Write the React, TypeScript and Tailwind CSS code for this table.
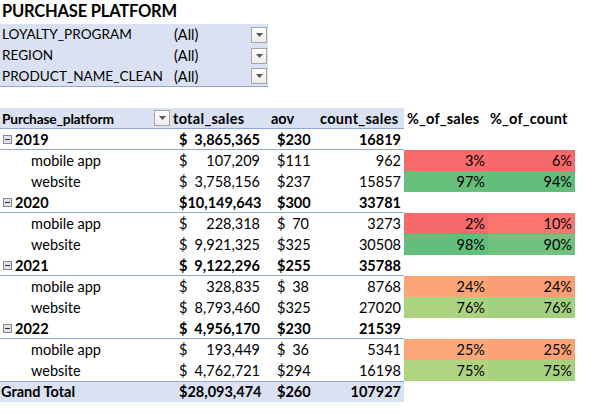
import React from "react";

type Row =
  | { kind: "year"; label: string; total: string; aov: string; count: string }
  | { kind: "item"; label: string; total: string; aov: string; count: string; ps: string; pc: string; cs: string; cc: string };

const rows: Row[] = [
  { kind: "year", label: "2019", total: "3,865,365", aov: "230", count: "16819" },
  { kind: "item", label: "mobile app", total: "107,209", aov: "111", count: "962", ps: "3%", pc: "6%", cs: "#F86A6B", cc: "#F8696B" },
  { kind: "item", label: "website", total: "3,758,156", aov: "237", count: "15857", ps: "97%", pc: "94%", cs: "#66BF7B", cc: "#63BE7B" },
  { kind: "year", label: "2020", total: "10,149,643", aov: "300", count: "33781" },
  { kind: "item", label: "mobile app", total: "228,318", aov: "70", count: "3273", ps: "2%", pc: "10%", cs: "#F8696B", cc: "#F9756D" },
  { kind: "item", label: "website", total: "9,921,325", aov: "325", count: "30508", ps: "98%", pc: "90%", cs: "#63BE7B", cc: "#71C27C" },
  { kind: "year", label: "2021", total: "9,122,296", aov: "255", count: "35788" },
  { kind: "item", label: "mobile app", total: "328,835", aov: "38", count: "8768", ps: "24%", pc: "24%", cs: "#FBA577", cc: "#FB9E75" },
  { kind: "item", label: "website", total: "8,793,460", aov: "325", count: "27020", ps: "76%", pc: "76%", cs: "#ABD37F", cc: "#A3D07F" },
  { kind: "year", label: "2022", total: "4,956,170", aov: "230", count: "21539" },
  { kind: "item", label: "mobile app", total: "193,449", aov: "36", count: "5341", ps: "25%", pc: "25%", cs: "#FBA777", cc: "#FBA176" },
  { kind: "item", label: "website", total: "4,762,721", aov: "294", count: "16198", ps: "75%", pc: "75%", cs: "#AED47F", cc: "#A6D17F" },
];

function DropBtn() {
  return (
    <div className="w-[16px] h-[16px] border border-[#A6A6A6] bg-gradient-to-b from-white to-[#ECECEC] flex items-center justify-center shrink-0">
      <svg width="7" height="4" viewBox="0 0 7 4">
        <path d="M0 0 L7 0 L3.5 4 Z" fill="#595959" />
      </svg>
    </div>
  );
}

function Minus() {
  return (
    <div className="w-[9px] h-[9px] border border-[#8A8A8A] bg-[#DDE2EC] flex items-center justify-center">
      <div className="w-[5px] h-[1px] bg-[#333]" />
    </div>
  );
}

function Money({ v, w, bold }: { v: string; w: string; bold?: boolean }) {
  return (
    <div className={`${w} flex justify-between pl-[9px] pr-[8px] ${bold ? "font-bold" : ""}`}>
      <span>$</span>
      <span>{v}</span>
    </div>
  );
}

export default function App() {
  return (
    <div className="w-[602px] h-[416px] bg-white text-black overflow-hidden font-['Lato',sans-serif] text-[14.5px] leading-[21px]">
      <div className="h-[24px] pl-[2px] font-bold text-[16.5px] leading-[22px] tracking-[-0.2px]">PURCHASE PLATFORM</div>
      <div className="w-[268px] bg-[#D9E1F2] border-b border-[#8EA9DB]">
        {[
          ["LOYALTY_PROGRAM", "h-[21px]"],
          ["REGION", "h-[21px]"],
          ["PRODUCT_NAME_CLEAN", "h-[20px]"],
        ].map(([l, h]) => (
          <div key={l} className={`${h} flex items-center`}>
            <div className="w-[174px] pl-[2px] text-[13.6px]">{l}</div>
            <div className="flex-1">(All)</div>
            <div className="pr-[1px]">
              <DropBtn />
            </div>
          </div>
        ))}
      </div>
      <div className="h-[21px]" />
      {/* header */}
      <div className="h-[21px] flex">
        <div className="flex w-[404px] bg-[#D9E1F2] border-b border-[#8EA9DB] font-bold">
          <div className="w-[170px] flex items-center justify-between pl-[2px]">
            <span className="text-[13.8px] tracking-[-0.2px]">Purchase_platform</span>
            <DropBtn />
          </div>
          <div className="w-[98px] pl-[3px] tracking-[0.3px]">total_sales</div>
          <div className="w-[49px] pl-[3px]">aov</div>
          <div className="w-[87px] pl-[3px] tracking-[0.3px]">count_sales</div>
        </div>
        <div className="w-[84px] pl-[3px] font-bold tracking-[0.2px]">%_of_sales</div>
        <div className="w-[87px] pl-[2px] font-bold tracking-[0.2px]">%_of_count</div>
      </div>
      {rows.map((r, i) =>
        r.kind === "year" ? (
          <div key={i} className="h-[21px] flex">
            <div className="flex w-[404px] border-b border-[#8EA9DB] font-bold">
              <div className="w-[170px] flex items-center pl-[3px] gap-[3px]">
                <Minus />
                <span>{r.label}</span>
              </div>
              <Money v={r.total} w="w-[98px]" bold />
              <Money v={r.aov} w="w-[49px]" bold />
              <div className="w-[87px] text-right pr-[3px]">{r.count}</div>
            </div>
          </div>
        ) : (
          <div key={i} className="h-[21px] flex">
            <div className="w-[170px] pl-[31px]">{r.label}</div>
            <Money v={r.total} w="w-[98px]" />
            <Money v={r.aov} w="w-[49px]" />
            <div className="w-[87px] text-right pr-[3px]">{r.count}</div>
            <div className="w-[84px] text-right pr-[3px]" style={{ backgroundColor: r.cs }}>
              {r.ps}
            </div>
            <div className="w-[87px] text-right pr-[3px]" style={{ backgroundColor: r.cc }}>
              {r.pc}
            </div>
          </div>
        )
      )}
      <div className="h-[21px] flex">
        <div className="flex w-[404px] bg-[#D9E1F2] border-t border-[#8EA9DB] font-bold leading-[20px]">
          <div className="w-[170px] pl-[1px]">Grand Total</div>
          <Money v="28,093,474" w="w-[98px]" bold />
          <Money v="260" w="w-[49px]" bold />
          <div className="w-[87px] text-right pr-[3px]">107927</div>
        </div>
      </div>
    </div>
  );
}
